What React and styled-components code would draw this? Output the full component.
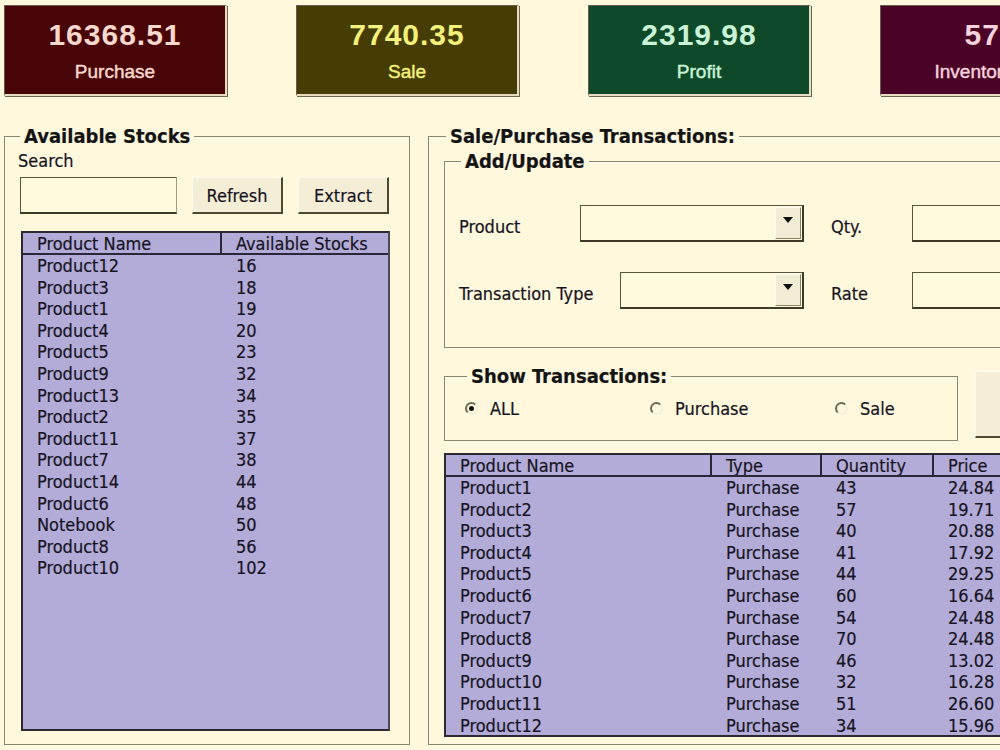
import React from 'react';
import styled, { createGlobalStyle } from 'styled-components';

const GlobalStyle = createGlobalStyle`
  html, body {
    margin: 0;
    padding: 0;
    background: #fff8dc;
    overflow: hidden;
  }
  body {
    font-family: "DejaVu Sans Condensed", "DejaVu Sans", sans-serif;
    font-stretch: condensed;
  }
`;

const cards = [
  { value: '16368.51', label: 'Purchase', bg: '#480406', fg: '#f7d8cc' },
  { value: '7740.35', label: 'Sale', bg: '#463d05', fg: '#f4f07c' },
  { value: '2319.98', label: 'Profit', bg: '#0e4a2a', fg: '#c9f2d6' },
  { value: '571', label: 'Inventory Qty', bg: '#4a0326', fg: '#f5d2de' },
];

const stocks = [
  ['Product12', 16], ['Product3', 18], ['Product1', 19], ['Product4', 20],
  ['Product5', 23], ['Product9', 32], ['Product13', 34], ['Product2', 35],
  ['Product11', 37], ['Product7', 38], ['Product14', 44], ['Product6', 48],
  ['Notebook', 50], ['Product8', 56], ['Product10', 102],
];

const transactions = [
  ['Product1', 43, '24.84'], ['Product2', 57, '19.71'], ['Product3', 40, '20.88'],
  ['Product4', 41, '17.92'], ['Product5', 44, '29.25'], ['Product6', 60, '16.64'],
  ['Product7', 54, '24.48'], ['Product8', 70, '24.48'], ['Product9', 46, '13.02'],
  ['Product10', 32, '16.28'], ['Product11', 51, '26.60'], ['Product12', 34, '15.96'],
];

const App = () => {
  return (
    <Page>
      <GlobalStyle />
      <CardRow>
        {cards.map(c => (
          <Card key={c.label} bg={c.bg} fg={c.fg}>
            <CardValue>{c.value}</CardValue>
            <CardLabel>{c.label}</CardLabel>
          </Card>
        ))}
      </CardRow>

      <Main>
        <StockFrame>
          <Legend>Available Stocks</Legend>
          <SearchLabel>Search</SearchLabel>
          <SearchRow>
            <TextBox width={157} />
            <Button>Refresh</Button>
            <Button>Extract</Button>
          </SearchRow>
          <ListBox>
            <ListHeader>
              <HeadCell width={199}>Product Name</HeadCell>
              <HeadCell last>Available Stocks</HeadCell>
            </ListHeader>
            {stocks.map(([name, qty]) => (
              <ListRow key={name}>
                <Cell width={199}>{name}</Cell>
                <Cell>{qty}</Cell>
              </ListRow>
            ))}
          </ListBox>
        </StockFrame>

        <TransFrame>
          <Legend>Sale/Purchase Transactions:</Legend>
          <AddFrame>
            <Legend>Add/Update</Legend>
            <FormRow>
              <FieldLabel width={121}>Product</FieldLabel>
              <Combo width={224}><DropBtn><Arrow /></DropBtn></Combo>
              <FieldLabel width={108} indent>Qty.</FieldLabel>
              <TextBox width={200} />
            </FormRow>
            <FormRow>
              <FieldLabel width={161}>Transaction Type</FieldLabel>
              <Combo width={184}><DropBtn><Arrow /></DropBtn></Combo>
              <FieldLabel width={108} indent>Rate</FieldLabel>
              <TextBox width={200} />
            </FormRow>
          </AddFrame>

          <FilterRow>
            <ShowFrame>
              <Legend>Show Transactions:</Legend>
              <RadioRow>
                <Radio width={185}><Dot checked />ALL</Radio>
                <Radio width={185}><Dot />Purchase</Radio>
                <Radio><Dot />Sale</Radio>
              </RadioRow>
            </ShowFrame>
            <SideButton />
          </FilterRow>

          <Grid>
            <ListHeader>
              <HeadCell width={266}>Product Name</HeadCell>
              <HeadCell width={110}>Type</HeadCell>
              <HeadCell width={112}>Quantity</HeadCell>
              <HeadCell last>Price</HeadCell>
            </ListHeader>
            {transactions.map(([name, qty, price]) => (
              <ListRow key={name}>
                <Cell width={266}>{name}</Cell>
                <Cell width={110}>Purchase</Cell>
                <Cell width={112}>{qty}</Cell>
                <Cell>{price}</Cell>
              </ListRow>
            ))}
          </Grid>
        </TransFrame>
      </Main>
    </Page>
  );
};

export default App;

const Page = styled.div`
  width: 1000px;
  height: 750px;
  overflow: hidden;
  background: #fff8dc;
  color: #17141f;
  font-size: 18px;
  -webkit-text-stroke: 0.2px currentColor;
`;

const CardRow = styled.div`
  display: flex;
  gap: 69px;
  padding: 5px 0 0 4px;
  width: 1200px;
`;

const Card = styled.div`
  flex: 0 0 auto;
  width: 220px;
  height: 88px;
  background: ${p => p.bg};
  color: ${p => p.fg};
  border-top: 1px solid #6a5a50;
  border-left: 1px solid #6a5a50;
  border-right: 2px solid #e8dcc0;
  border-bottom: 2px solid #e8dcc0;
  box-shadow: 1px 1px 0 #6e6650;
  display: flex;
  flex-direction: column;
  align-items: center;
  font-family: "Liberation Sans", Arial, sans-serif;
  font-stretch: normal;
  -webkit-text-stroke: 0;
`;

const CardValue = styled.div`
  font-size: 30px;
  font-weight: bold;
  letter-spacing: 1px;
  margin-top: 12px;
  line-height: 34px;
`;

const CardLabel = styled.div`
  font-size: 19px;
  margin-top: 9px;
  line-height: 22px;
  -webkit-text-stroke: 0.45px currentColor;
`;

const Main = styled.div`
  display: flex;
  gap: 18px;
  padding: 29px 0 0 4px;
`;

const Frame = styled.fieldset`
  flex-shrink: 0;
  margin: 0;
  border: 1px solid #8c8566;
  box-shadow: 1px 1px 0 #fffdf0, inset 1px 1px 0 #fffdf0;
  min-width: 0;
  box-sizing: border-box;
`;

const Legend = styled.legend`
  font-weight: bold;
  font-size: 20px;
  padding: 0 4px;
  margin-left: 2px;
  line-height: 22px;
  color: #141414;
`;

const StockFrame = styled(Frame)`
  width: 406px;
  height: 620px;
  padding: 0 20px 0 13px;
`;

const SearchLabel = styled.div`
  margin: 4px 0 6px 0;
  line-height: 20px;
`;

const SearchRow = styled.div`
  display: flex;
  gap: 15px;
  align-items: center;
  margin-left: 2px;
`;

const TextBox = styled.div`
  flex: 0 0 auto;
  width: ${p => p.width}px;
  height: 37px;
  box-sizing: border-box;
  background: #fff9de;
  border: 1px solid #5a543c;
  border-bottom: 2px solid #3e3a28;
  border-right-color: #a29c80;
`;

const Button = styled.div`
  flex: 0 0 91px;
  height: 37px;
  box-sizing: border-box;
  background: #f4eed6;
  border-top: 1px solid #fffdf2;
  border-left: 1px solid #fffdf2;
  border-right: 2px solid #4e4832;
  border-bottom: 2px solid #4e4832;
  display: flex;
  align-items: center;
  justify-content: center;
`;

const ListBox = styled.div`
  margin: 17px 0 0 3px;
  width: 369px;
  height: 500px;
  box-sizing: border-box;
  background: #b3acd9;
  border: 2px solid #2c2a30;
  border-right-color: #4a4850;
`;

const ListHeader = styled.div`
  display: flex;
  height: 20px;
  border-bottom: 2px solid #2a2838;
  line-height: 22px;
`;

const HeadCell = styled.div`
  flex: ${p => (p.width ? `0 0 ${p.width}px` : '1')};
  box-sizing: border-box;
  padding-left: 14px;
  white-space: nowrap;
  overflow: hidden;
  border-right: ${p => (p.last ? 'none' : '2px solid #2a2838')};
`;

const ListRow = styled.div`
  display: flex;
  height: 21.6px;
  line-height: 22px;
`;

const Cell = styled.div`
  flex: ${p => (p.width ? `0 0 ${p.width}px` : '1')};
  padding-left: 14px;
  box-sizing: border-box;
  white-space: nowrap;
`;

const TransFrame = styled(Frame)`
  width: 640px;
  height: 620px;
  padding: 0 0 0 15px;
`;

const AddFrame = styled(Frame)`
  margin-top: 3px;
  height: 198px;
  padding: 33px 0 0 14px;
  display: flex;
  flex-direction: column;
  gap: 30px;
`;

const FormRow = styled.div`
  display: flex;
  align-items: center;
`;

const FieldLabel = styled.div`
  flex: 0 0 ${p => p.width}px;
  box-sizing: border-box;
  padding-left: ${p => (p.indent ? '27px' : '0')};
  padding-top: 6px;
`;

const Combo = styled.div`
  flex: 0 0 auto;
  width: ${p => p.width}px;
  height: 37px;
  box-sizing: border-box;
  background: #fff9de;
  border: 1px solid #5a543c;
  border-bottom: 2px solid #3e3a28;
  border-right: 2px solid #3e3a28;
  display: flex;
  justify-content: flex-end;
  padding: 1px;
`;

const DropBtn = styled.div`
  width: 26px;
  box-sizing: border-box;
  background: #f2ecd4;
  border-top: 1px solid #fffdf2;
  border-left: 1px solid #fffdf2;
  border-right: 1px solid #8a8468;
  border-bottom: 1px solid #8a8468;
  display: flex;
  justify-content: center;
  padding-top: 9px;
`;

const Arrow = styled.div`
  width: 0;
  height: 0;
  border-left: 5px solid transparent;
  border-right: 5px solid transparent;
  border-top: 6px solid #111;
`;

const FilterRow = styled.div`
  display: flex;
  align-items: flex-start;
  gap: 17px;
  margin-top: 17px;
`;

const ShowFrame = styled(Frame)`
  width: 514px;
  height: 76px;
  padding: 11px 0 0 20px;
`;

const RadioRow = styled.div`
  display: flex;
  align-items: center;
`;

const Radio = styled.div`
  flex: 0 0 ${p => (p.width ? `${p.width}px` : 'auto')};
  display: flex;
  align-items: center;
  gap: 12px;
`;

const Dot = styled.span`
  width: 13px;
  height: 13px;
  border-radius: 50%;
  box-sizing: border-box;
  border: 2px solid #6e6854;
  border-right-color: #f4efd8;
  border-bottom-color: #f4efd8;
  background: #fff9de;
  display: inline-flex;
  align-items: center;
  justify-content: center;
  &::after {
    content: '';
    width: 5px;
    height: 5px;
    border-radius: 50%;
    background: ${p => (p.checked ? '#111' : 'transparent')};
  }
`;

const SideButton = styled.div`
  margin-top: 6px;
  width: 60px;
  height: 67px;
  box-sizing: border-box;
  background: #f4eed6;
  border-top: 1px solid #fffdf2;
  border-left: 1px solid #fffdf2;
  border-bottom: 2px solid #4e4832;
`;

const Grid = styled.div`
  margin-top: 12px;
  width: 620px;
  height: 284px;
  box-sizing: border-box;
  background: #b3acd9;
  border: 2px solid #2c2a30;
  overflow: hidden;
`;
